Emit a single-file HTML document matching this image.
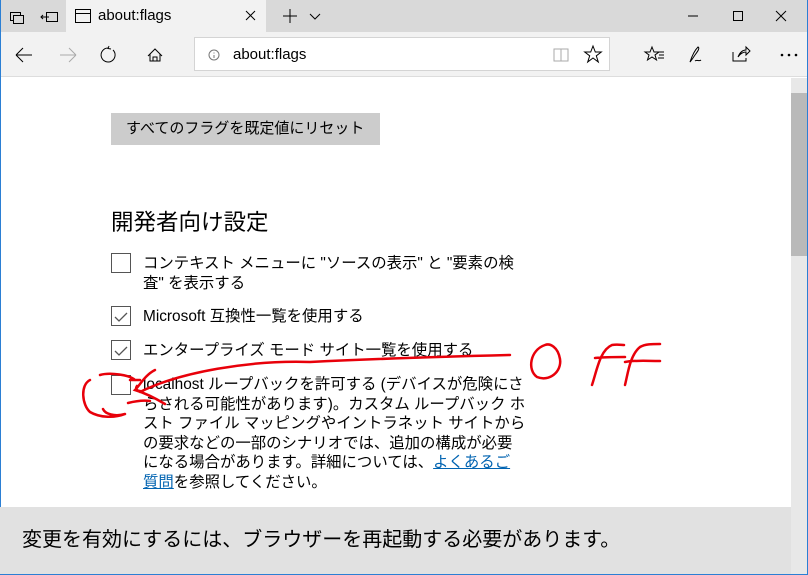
<!DOCTYPE html>
<html><head><meta charset="utf-8"><style>
*{margin:0;padding:0;box-sizing:border-box}
body{width:808px;height:575px;overflow:hidden;font-family:"Liberation Sans","Noto Sans CJK JP",sans-serif;background:#fff;position:relative;color:#000}
.abs{position:absolute}
.tabbar{left:0;top:0;width:808px;height:32px;background:#d9d9d9}
.tab{left:66px;top:0;width:200px;height:32px;background:#f2f2f2}
.toolbar{left:0;top:32px;width:808px;height:45px;background:#f2f2f2;border-bottom:1px solid #ddd}
.addr{left:194px;top:37px;width:416px;height:34px;background:#fff;border:1px solid #d4d4d4}
.t{font-size:15px;color:#000}
.cb{width:20px;height:20px;border:1px solid #555;background:#fff}
.txt{font-size:15.4px;line-height:19.6px;color:#000}
a{color:#0063b1;text-decoration:underline}
</style></head><body>
<div class="abs tabbar"></div>
<div class="abs tab"></div>
<svg class="abs" style="left:0;top:0" width="808" height="77" fill="none" stroke="#000" stroke-width="1">
<rect x="10.5" y="12.5" width="10" height="8"/><rect x="13.5" y="15.5" width="10" height="8" fill="#d9d9d9"/>
<rect x="46.5" y="12.5" width="11" height="9"/><path d="M41 17h8M43 15l-2 2 2 2"/>
<rect x="75.5" y="9.5" width="15" height="13"/><path d="M75.5 13.5h15"/>
<path d="M246 11l9 9M255 11l-9 9"/>
<path d="M283 16h14M290 9v14"/><path d="M310 14l5 5 5-5"/>
<path d="M688 16h10"/><rect x="733.5" y="11.5" width="9" height="9"/><path d="M776 11l10 10M786 11l-10 10"/>
</svg>
<div class="abs t" style="left:98px;top:7px">about:flags</div>
<div class="abs toolbar"></div>
<div class="abs addr"></div>
<svg class="abs" style="left:0;top:32px" width="808" height="45" fill="none" stroke="#000" stroke-width="1">
<path d="M16 23h16M16 23l7-7M16 23l7 7"/>
<path d="M60 23h16M76 23l-7-7M76 23l-7 7" stroke="#aaa"/>
<path d="M108 16a7 7 0 1 0 5 2"/><path d="M109 14l-1 2.5 3 0.5"/>
<path d="M148 24l7-7 7 7M150 22v7h10v-7M153 29v-4h4v4"/>
<circle cx="214" cy="23" r="5" stroke="#777"/><path d="M214 20.5v1M214 23v3" stroke="#777"/>
<path d="M554 17h7v12h-7zM561 17h7v12h-7z" stroke="#aaa"/>
<path d="M593 14l2.3 6h6l-5 3.8 2 6.2-5.3-4-5.3 4 2-6.2-5-3.8h6z"/>
<path d="M652 15l2 5h5l-4 3 1.5 5-4.5-3-4.5 3 1.5-5-4-3h5zM658 20h6M659 23h5M658 26h6"/>
<path d="M690 30c2-6 5-12 8-15 2 1 0 4-3 8-2 3-4 6-5 7zM695 29c2-2 4 1 6-1"/>
<path d="M733 20v9h13v-3M738 25c2-5 5-7 8-7v-3l4 4-4 4v-3c-3 0-6 2-8 5z"/>
<circle cx="782" cy="23" r="0.8" fill="#000"/><circle cx="789" cy="23" r="0.8" fill="#000"/><circle cx="796" cy="23" r="0.8" fill="#000"/>
</svg>
<div class="abs t" style="left:233px;top:46px">about:flags</div>
<div class="abs" style="left:791px;top:78px;width:16px;height:497px;background:#e8e8e8"></div>
<div class="abs" style="left:791px;top:93px;width:16px;height:163px;background:#b9b9b9"></div>
<div class="abs" style="left:807px;top:0;width:1px;height:575px;background:#2b7fd4"></div>
<div class="abs" style="left:0;top:0;width:1px;height:575px;background:#2b7fd4"></div>
<div class="abs" style="left:0;top:574px;width:808px;height:1px;background:#2b7fd4"></div>
<div class="abs" style="left:111px;top:113px;width:269px;height:32px;background:#ccc;font-size:15px;line-height:32px;padding-left:15px">すべてのフラグを既定値にリセット</div>
<div class="abs" style="left:111px;top:205px;font-size:22.5px">開発者向け設定</div>
<div class="abs cb" style="left:111px;top:253px"></div>
<div class="abs txt" style="left:143px;top:254px;width:390px">コンテキスト メニューに "ソースの表示" と "要素の検<br>査" を表示する</div>
<div class="abs cb" style="left:111px;top:306px"></div>
<div class="abs txt" style="left:143px;top:307px">Microsoft 互換性一覧を使用する</div>
<div class="abs cb" style="left:111px;top:340px"></div>
<div class="abs txt" style="left:143px;top:341px">エンタープライズ モード サイト一覧を使用する</div>
<div class="abs cb" style="left:111px;top:375px"></div>
<div class="abs txt" style="left:143px;top:375px;width:390px">localhost ループバックを許可する (デバイスが危険にさ<br>らされる可能性があります)。カスタム ループバック ホ<br>スト ファイル マッピングやイントラネット サイトから<br>の要求などの一部のシナリオでは、追加の構成が必要<br>になる場合があります。詳細については、<a>よくあるご<br>質問</a>を参照してください。</div>
<svg class="abs" style="left:0;top:0" width="808" height="575" fill="none" stroke="#555" stroke-width="1.3">
<path d="M115 317l4 4 8-8"/><path d="M115 351l4 4 8-8"/>
</svg>
<div class="abs" style="left:0;top:507px;width:791px;height:67px;background:#e1e1e1;font-size:20px;line-height:67px;padding-left:22px">変更を有効にするには、ブラウザーを再起動する必要があります。</div>
<svg class="abs" style="left:0;top:0" width="808" height="575" fill="none" stroke="#e8000a" stroke-width="2.5" stroke-linecap="round">
<path d="M90 380c-10 5-8 25 0 32 10 6 25 6 35 2M125 414c-10 3-20 0-22-5M100 375c10-3 30 0 35 5M130 380l10 0"/>
<path d="M137 386c-2 3 0 5 3 5M155 370c-10 5-15 15-20 20 10 3 20 8 30 14M140 392c40-20 110-32 170-30 60-3 120-5 200-7"/>
<path d="M128 403c8-2 15-3 22-2"/>
<path d="M545 345c-15 5-18 25-8 32 12 5 25-5 23-18-2-12-10-16-15-14"/>
<path d="M592 385c5-15 8-35 20-40 5-1 10 0 12 0M595 358c10-1 20-1 30-1"/>
<path d="M625 385c3-12 5-30 15-38 5-3 12-3 20-3M625 362c10-2 20-1 35-1"/>
</svg>
</body></html>
